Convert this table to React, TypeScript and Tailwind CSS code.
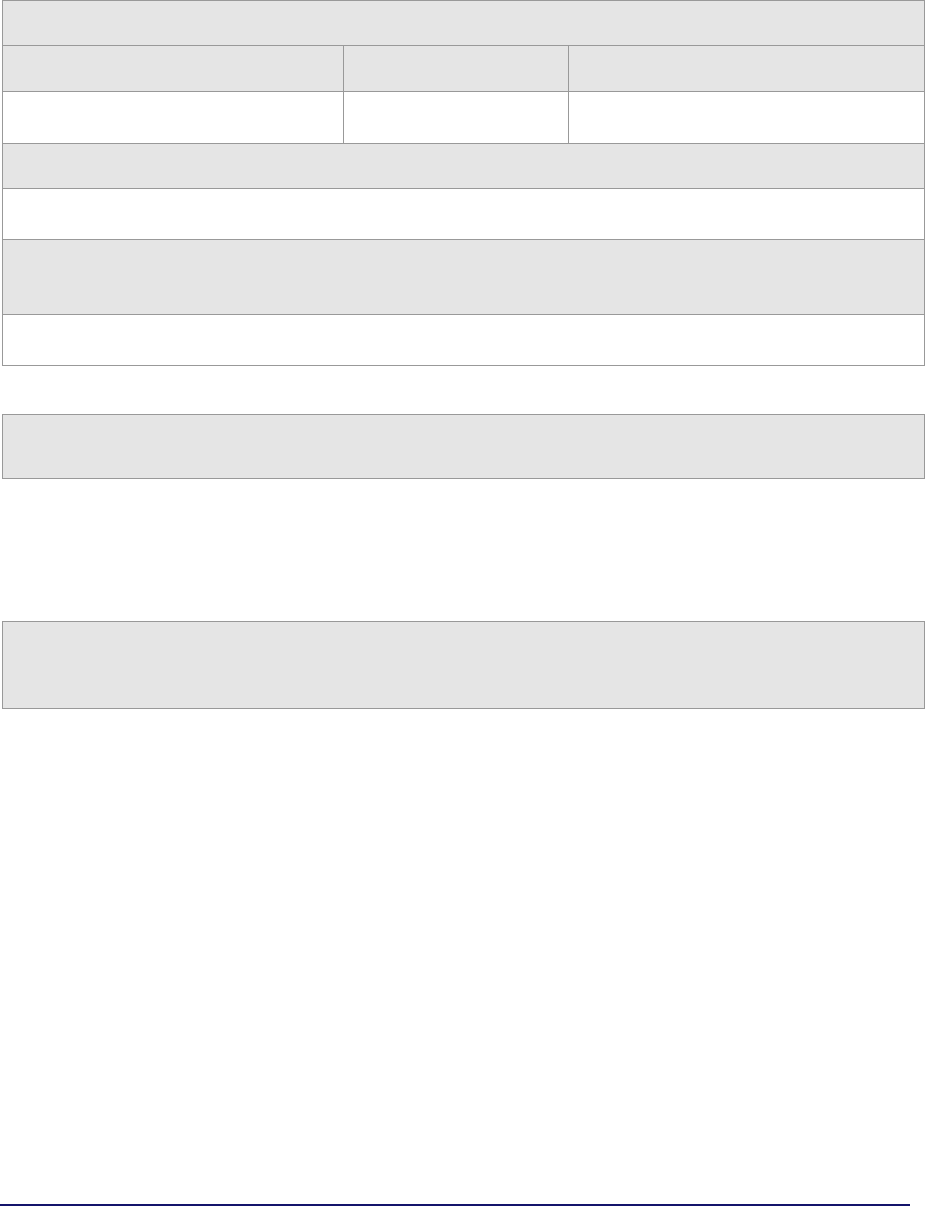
import React from 'react';

const ROWS: { h: string; shaded: boolean; cols?: boolean }[] = [
  { h: 'h-[45px]', shaded: true },
  { h: 'h-[46px]', shaded: true, cols: true },
  { h: 'h-[52px]', shaded: false, cols: true },
  { h: 'h-[45px]', shaded: true },
  { h: 'h-[51px]', shaded: false },
  { h: 'h-[75px]', shaded: true },
  { h: 'h-[51px]', shaded: false },
];

const App: React.FC = () => {
  return (
    <div className="relative min-h-[1206px] bg-white pl-[2px] font-['Liberation_Sans',sans-serif]">
      <div className="w-[923px] border-x border-t border-[#999999]">
        {ROWS.map((row, i) => (
          <div
            key={i}
            className={`${row.h} border-b border-[#999999] ${row.shaded ? 'bg-[#e5e5e5]' : 'bg-white'} flex`}
          >
            {row.cols && (
              <>
                <div className="w-[341px] border-r border-[#999999]" />
                <div className="w-[225px] border-r border-[#999999]" />
                <div className="flex-1" />
              </>
            )}
          </div>
        ))}
      </div>

      <div className="mt-[48px] h-[65px] w-[923px] border border-[#999999] bg-[#e5e5e5]" />

      <div className="mt-[142px] h-[88px] w-[923px] border border-[#999999] bg-[#e5e5e5]" />

      <div className="absolute bottom-0 left-0 h-[2px] w-[910px] bg-[#14146b]" />
    </div>
  );
};

export default App;
